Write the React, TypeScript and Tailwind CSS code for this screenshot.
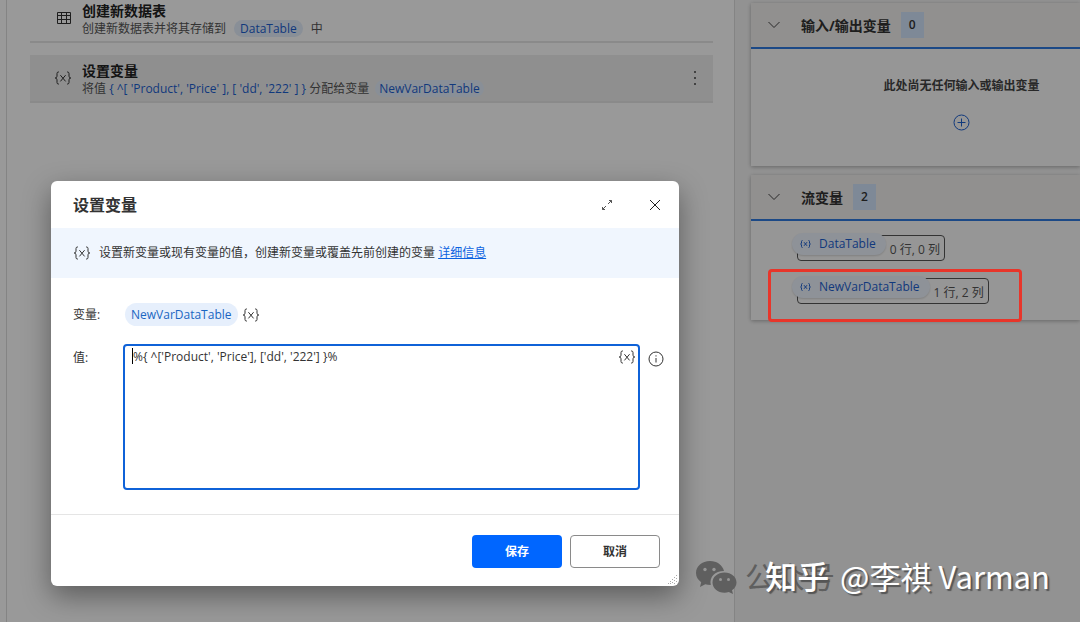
import React from "react";

function VarGlyph({ className = "" }: { className?: string }) {
  return (
    <svg viewBox="0 0 18 14" fill="none" stroke="currentColor" className={className} aria-hidden="true">
      <path d="M5 1H4.4Q3 1 3 2.5V5.2Q3 6.8 1.2 7Q3 7.2 3 8.8V11.5Q3 13 4.4 13H5" />
      <path d="M13 1h.6Q15 1 15 2.5V5.2Q15 6.8 16.8 7Q15 7.2 15 8.8V11.5Q15 13 13.6 13H13" />
      <path d="M6.4 4.2 11.6 10.4M11.6 4.2 6.4 10.4" />
    </svg>
  );
}

function SmallVarGlyph() {
  return (
    <svg viewBox="0 0 11 8" fill="none" stroke="currentColor" className="h-2 w-[11px]" aria-hidden="true">
      <path d="M2.500.500Q1.500.500 1.500 1.500V3L.700 4l.800 1v1.500q0 1 1 1M8.500.500q1 0 1 1V3l.800 1-.800 1v1.500q0 1-1 1M4 2.200 7 5.800M7 2.200 4 5.800" />
    </svg>
  );
}

function Chevron() {
  return (
    <svg viewBox="0 0 14 8" fill="none" stroke="#444" className="h-2 w-3.5" aria-hidden="true">
      <path d="M1.500 1 7 6.500 12.500 1" />
    </svg>
  );
}

function Step({
  icon,
  title,
  selected = false,
  children,
}: {
  icon: React.ReactNode;
  title: string;
  selected?: boolean;
  children: React.ReactNode;
}) {
  return (
    <li
      className={
        selected
          ? "flex h-12 items-center border-b-2 border-[#e6e6e6] bg-[#efefef] pl-6 pr-3"
          : "flex h-12 items-center border-b-2 border-[#e6e6e6] pl-6 pr-3"
      }
    >
      <span className="flex w-7 shrink-0 items-center">{icon}</span>
      <div className="min-w-0 flex-1 pt-0.5">
        <h3 className="text-[14px] font-bold leading-[18px] text-[#222]">{title}</h3>
        <p className="whitespace-nowrap text-[12px] leading-[17px] text-[#555]">{children}</p>
      </div>
      {selected && (
        <button type="button" aria-label="更多" className="flex h-6 w-3 items-center justify-center">
          <svg viewBox="0 0 4 16" fill="#444" className="h-4 w-1">
            <circle cx="2" cy="2" r="1" />
            <circle cx="2" cy="8" r="1" />
            <circle cx="2" cy="14" r="1" />
          </svg>
        </button>
      )}
    </li>
  );
}

function Panel({ title, count, children }: { title: string; count: number; children: React.ReactNode }) {
  return (
    <section className="bg-[#fbfbfb] shadow-[0_1px_4px_rgba(0,0,0,0.3)]">
      <header className="flex h-[46px] items-center border-b-2 border-[#2f7be0] bg-[#f2f0ee] pl-4">
        <button type="button" aria-label="折叠" className="w-[34px]">
          <Chevron />
        </button>
        <h2 className="pt-0.5 text-[14px] font-bold leading-5 text-[#333]">{title}</h2>
        <span className="ml-2.5 flex h-[26px] w-[23px] items-center justify-center bg-[#d2e4fc] text-[12px] font-semibold text-[#333]">
          {count}
        </span>
      </header>
      {children}
    </section>
  );
}

function VariableRow({ name, value }: { name: string; value: string }) {
  return (
    <li className="flex w-max items-start rounded-sm border border-[#555] pr-1">
      <span className="-ml-1.5 -mt-[3px] flex h-[22px] items-center gap-2 rounded-full bg-[#edf3fd] pl-2 pr-2.5 text-[12px] text-[#1c5fd0] shadow-[0_1px_2px_rgba(0,0,0,0.15)]">
        <SmallVarGlyph />
        {name}
      </span>
      <span className="pl-1 pt-1 text-[12px] leading-5 text-[#555]">{value}</span>
    </li>
  );
}

function Watermark() {
  return (
    <div className="pointer-events-none absolute bottom-[25px] right-7 h-11 w-[360px]">
      <div className="absolute left-[3px] top-0.5 flex items-center gap-2 whitespace-nowrap text-[30px] leading-[44px] text-[#5f5f5f]">
        <svg viewBox="0 0 42 34" className="h-[34px] w-[42px]" aria-hidden="true">
          <path
            fill="#5f5f5f"
            d="M15 1C7 1 1 6.2 1 13c0 3.8 2 7 5.200 9.200L5 27l5.200-2.700c1.700.5 3.600.7 5.600.7C14 17 20 11 29 11 27.500 5 22 1 15 1Z"
          />
          <path
            fill="#5f5f5f"
            d="M29.500 12.500c-6.800 0-12 4.400-12 10s5.200 10.200 12 10.200c1.500 0 3-.2 4.300-.7L38 34l-1-3.700c2.800-1.900 4.500-4.700 4.500-7.800 0-5.600-5.200-10-12-10Z"
          />
          <g fill="#969696">
            <circle cx="10" cy="9.500" r="1.700" />
            <circle cx="19" cy="9.500" r="1.700" />
            <circle cx="25.500" cy="19.500" r="1.500" />
            <circle cx="33.500" cy="19.500" r="1.500" />
          </g>
        </svg>
        <span>公众号</span>
      </div>
      <div className="absolute right-0.5 top-0 whitespace-nowrap font-['Noto_Sans_CJK_SC',sans-serif] text-[31px] leading-[44px] text-white [text-shadow:2px_2px_1px_#555]">
        <span className="mr-1 text-[32px] font-medium">知乎</span> @李祺 Varman
      </div>
    </div>
  );
}

export default function App() {
  return (
    <div className="relative flex h-screen overflow-hidden bg-white font-['Open_Sans','Noto_Sans_CJK_SC',sans-serif]">
      <main className="ml-1.5 min-w-0 flex-1 border-x border-[#ddd] pl-[23px] pr-[21px]">
        <ol className="-mt-[5px] flex flex-col gap-3">
          <Step
            title="创建新数据表"
            icon={
              <svg viewBox="0 0 16 14" fill="none" stroke="#333" className="ml-0.5 h-3.5 w-4" aria-hidden="true">
                <path d="M1.500 1.500h13v11h-13zM1.500 4.500h13M1.500 8.500h13M5.500 1.500v11M10.500 1.500v11" />
              </svg>
            }
          >
            创建新数据表并将其存储到
            <span className="mx-2 rounded-full bg-[#e4eefc] px-1.5 text-[#1c5fd0]">DataTable</span>中
          </Step>
          <Step selected title="设置变量" icon={<VarGlyph className="h-3.5 w-[18px] text-[#333]" />}>
            将值 <span className="text-[#1c5fd0]">{"{ ^[ 'Product', 'Price' ], [ 'dd', '222' ] }"}</span> 分配给变量
            <span className="ml-1.5 rounded-full bg-[#e4eefc] px-1 text-[#1c5fd0]">NewVarDataTable</span>
          </Step>
        </ol>
      </main>

      <aside className="flex w-[345px] shrink-0 flex-col gap-[9px] bg-[#f4f4f4] pl-4 pt-[3px]">
        <Panel title="输入/输出变量" count={0}>
          <div className="flex h-[117px] flex-col items-center gap-[18px] pl-[92px] pt-[27px]">
            <p className="text-[12px] font-semibold leading-5 text-[#444]">此处尚无任何输入或输出变量</p>
            <button type="button" aria-label="添加变量">
              <svg viewBox="0 0 17 17" fill="none" stroke="#1c5fd0" className="size-[17px]">
                <circle cx="8.500" cy="8.500" r="7.500" />
                <path d="M8.500 4.500v8M4.500 8.500h8" />
              </svg>
            </button>
          </div>
        </Panel>
        <Panel title="流变量" count={2}>
          <ul className="flex flex-col gap-[17px] pb-4 pl-[46px] pt-3.5">
            <VariableRow name="DataTable" value="0 行, 0 列" />
            <VariableRow name="NewVarDataTable" value="1 行, 2 列" />
          </ul>
        </Panel>
      </aside>

      <div className="absolute inset-0 bg-black/40" />
      <div className="absolute right-[58px] top-[269px] h-[53px] w-[254px] rounded-sm border-[3px] border-[#e8352a]" />

      <div
        role="dialog"
        aria-labelledby="dialog-title"
        className="absolute left-[51px] top-[181px] w-[628px] rounded-md bg-white text-[12px] text-[#333] shadow-[0_10px_28px_rgba(0,0,0,0.4)]"
      >
        <header className="flex h-[47px] items-center pl-[22px] pr-4">
          <h1 id="dialog-title" className="flex-1 text-[16px] font-bold leading-6">设置变量</h1>
          <button type="button" aria-label="展开" className="mr-8 flex size-4 items-center justify-center">
            <svg viewBox="0 0 12 12" fill="none" stroke="#555" className="size-3">
              <path d="M7 5l3.500-3.500M8 1.500h2.500v2.500M5 7l-3.500 3.500M1.500 8v2.500h2.500" />
            </svg>
          </button>
          <button type="button" aria-label="关闭" className="flex size-4 items-center justify-center">
            <svg viewBox="0 0 12 12" fill="none" stroke="#222" className="size-3">
              <path d="M1 1l10 10M11 1 1 11" />
            </svg>
          </button>
        </header>

        <div className="flex h-[50px] items-center gap-2 bg-[#f0f6fe] pl-[22px]">
          <VarGlyph className="h-3.5 w-[18px]" />
          <p className="whitespace-nowrap">
            设置新变量或现有变量的值，创建新变量或覆盖先前创建的变量{" "}
            <a href="#details" className="text-[#0b62e0] underline">详细信息</a>
          </p>
        </div>

        <div className="flex flex-col gap-[18px] pb-6 pl-[22px] pr-[15px] pt-[25px]">
          <div className="flex items-center">
            <span className="w-[52px]">变量:</span>
            <button type="button" className="h-[23px] rounded-full bg-[#e6effc] px-1.5 text-[#1a66c2]">
              NewVarDataTable
            </button>
            <button type="button" aria-label="选择变量" className="ml-1">
              <VarGlyph className="h-3.5 w-[18px]" />
            </button>
          </div>
          <div className="flex items-start">
            <label htmlFor="value" className="w-[50px] pt-1.5 leading-4">值:</label>
            <div className="relative flex flex-1">
              <textarea
                id="value"
                spellCheck={false}
                defaultValue="%{ ^['Product', 'Price'], ['dd', '222'] }%"
                className="h-[146px] w-full resize-none rounded-sm border-2 border-[#0f62d8] px-2 py-[3px] text-[12px] font-medium leading-4 outline-none"
              />
              <span className="absolute left-[9px] top-1 h-4 w-px bg-black" />
              <button type="button" aria-label="插入变量" className="absolute right-1 top-1.5">
                <VarGlyph className="h-3.5 w-[18px]" />
              </button>
            </div>
            <button type="button" aria-label="信息" className="ml-2 mt-[7px] shrink-0">
              <svg viewBox="0 0 16 16" fill="none" stroke="#333" className="size-4">
                <circle cx="8" cy="8" r="7" />
                <path d="M8 7v4.500M8 4.300v1.200" />
              </svg>
            </button>
          </div>
        </div>

        <footer className="relative flex justify-end gap-2 border-t border-[#e5e5e5] pb-[18px] pl-4 pr-[19px] pt-5">
          <button type="button" className="h-[33px] w-[90px] rounded-sm bg-[#0066ff] font-bold text-white">保存</button>
          <button type="button" className="h-[33px] w-[90px] rounded-sm border border-[#8a8a8a] font-bold">取消</button>
          <svg viewBox="0 0 12 12" fill="#aaa" className="absolute bottom-0 right-0 size-3" aria-hidden="true">
            <path d="M9 1h1v1H9zM7 3h1v1H7zM9 4h1v1H9zM5 5h1v1H5zM7 6h1v1H7zM3 7h1v1H3zM9 7h1v1H9zM5 8h1v1H5zM1 9h1v1H1zM3 9h1v1H3zM7 9h1v1H7z" />
          </svg>
        </footer>
      </div>

      <Watermark />
    </div>
  );
}
